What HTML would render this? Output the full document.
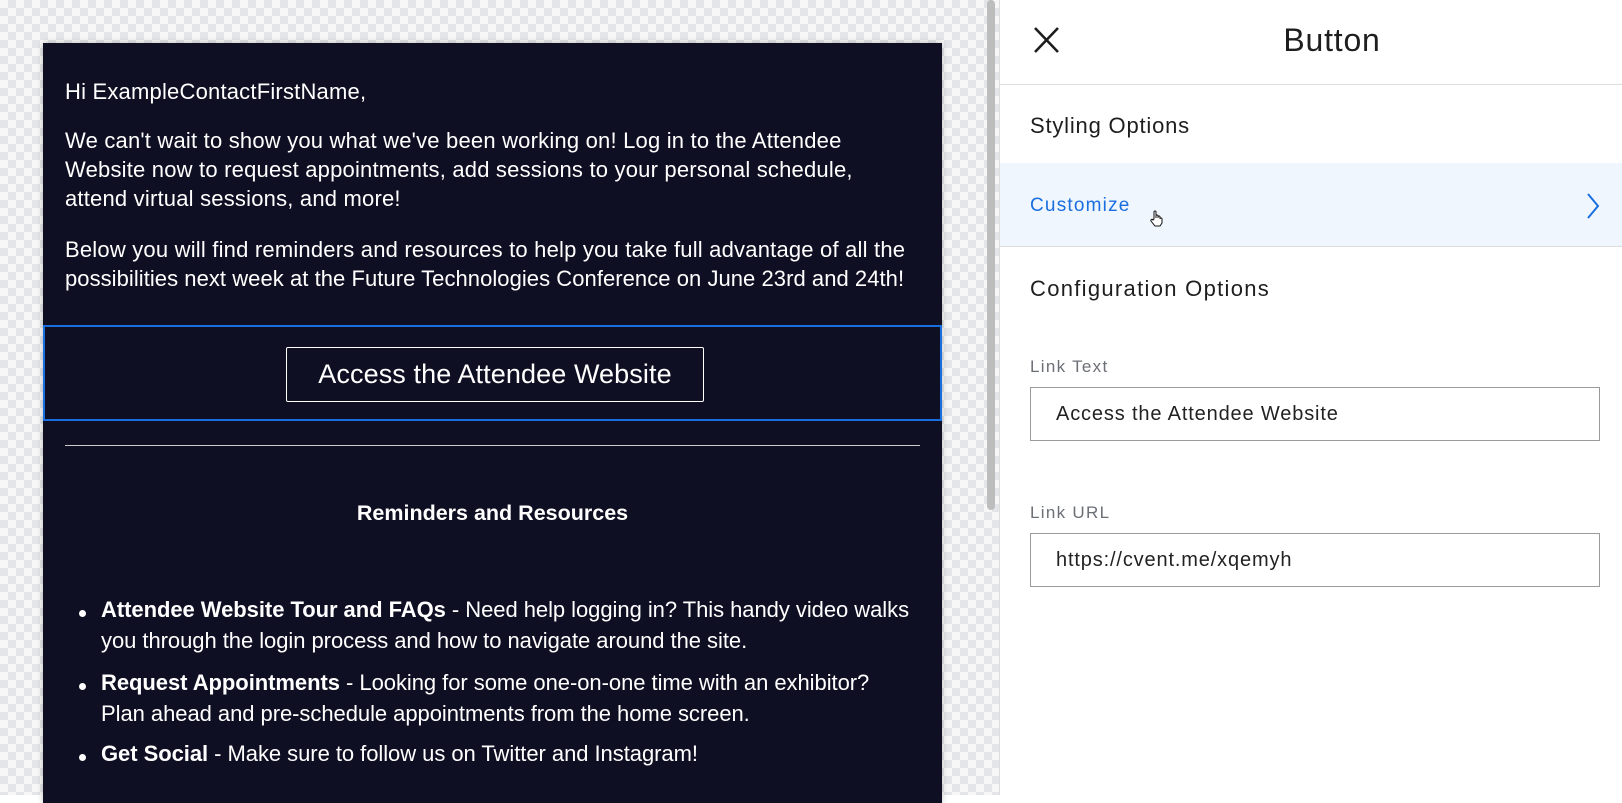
<!DOCTYPE html>
<html><head><meta charset="utf-8"><style>
*{margin:0;padding:0;box-sizing:border-box}
body{width:1622px;height:795px;overflow:hidden;position:relative;font-family:"Liberation Sans",sans-serif;background:#fff}
.left{position:absolute;left:0;top:0;width:999px;height:795px;background-color:#f4f5f6;background-image:conic-gradient(#e3e5e8 25%,#f7f7f8 0 50%,#e3e5e8 0 75%,#f7f7f8 0);background-size:16px 16px}
.scroll{position:absolute;left:987px;top:0;width:8px;height:510px;background:#bdbdbd;border-radius:4px}
.card{position:absolute;left:43px;top:43px;width:899px;height:760px;background:#0f0f23;box-shadow:0 0 6px rgba(0,0,0,.25);color:#fff;font-size:22px;letter-spacing:0.2px}
.t{position:absolute;left:22px;white-space:nowrap}
.sel{position:absolute;left:0;top:282px;width:899px;height:96px;border:2px solid #1a6fe0}
.btn{position:absolute;left:241px;top:20px;width:418px;height:55px;border:1px solid #fff;border-radius:2px;text-align:center;line-height:52px;font-size:27px;letter-spacing:0.1px}
.hr{position:absolute;left:22px;top:402px;width:855px;height:1px;background:#ccc}
.dot{position:absolute;left:36px;width:7px;height:7px;border-radius:50%;background:#fff}
.bl{letter-spacing:-0.05px}
.right{position:absolute;left:999px;top:0;width:623px;height:795px;background:#fff;border-left:1px solid #ddd;color:#1e1e1e}
.r{position:absolute;white-space:nowrap}
.div{position:absolute;left:0;width:623px;height:1px;background:#ddd}
.inp{position:absolute;left:30px;width:570px;height:54px;border:1px solid #9a9a9a;font-size:20px;letter-spacing:0.85px;padding-left:25px;line-height:52px;color:#222}
</style></head><body>
<div class="left"><div class="scroll"></div>
<div class="card">
<div class="t" style="top:36px">Hi ExampleContactFirstName,</div>
<div class="t" style="top:85px">We can't wait to show you what we've been working on! Log in to the Attendee</div>
<div class="t" style="top:114px">Website now to request appointments, add sessions to your personal schedule,</div>
<div class="t" style="top:143px">attend virtual sessions, and more!</div>
<div class="t" style="top:194px">Below you will find reminders and resources to help you take full advantage of all the</div>
<div class="t" style="top:223px;letter-spacing:0.05px">possibilities next week at the Future Technologies Conference on June 23rd and 24th!</div>
<div class="sel"><div class="btn">Access the Attendee Website</div></div>
<div class="hr"></div>
<div class="t" style="top:458px;left:0;width:899px;text-align:center;font-weight:bold;letter-spacing:0;font-size:21.5px">Reminders and Resources</div>
<div class="bl">
<div class="dot" style="top:567px"></div>
<div class="t" style="top:554px;left:58px"><b>Attendee Website Tour and FAQs</b> - Need help logging in? This handy video walks</div>
<div class="t" style="top:585px;left:58px">you through the login process and how to navigate around the site.</div>
<div class="dot" style="top:640px"></div>
<div class="t" style="top:627px;left:58px"><b>Request Appointments</b> - Looking for some one-on-one time with an exhibitor?</div>
<div class="t" style="top:658px;left:58px">Plan ahead and pre-schedule appointments from the home screen.</div>
<div class="dot" style="top:711px"></div>
<div class="t" style="top:698px;left:58px"><b>Get Social</b> - Make sure to follow us on Twitter and Instagram!</div>
</div>
</div></div>
<div class="right">
<svg style="position:absolute;left:33px;top:27px" width="27" height="26" viewBox="0 0 27 26"><path d="M2 1L25 25M25 1L2 25" stroke="#1e1e1e" stroke-width="2.6"/></svg>
<div class="r" style="left:0;width:664px;text-align:center;top:22px;font-size:32px;letter-spacing:0.8px">Button</div>
<div class="div" style="top:84px"></div>
<div class="r" style="left:30px;top:113px;font-size:22px;letter-spacing:0.8px">Styling Options</div>
<div style="position:absolute;left:0;top:163px;width:623px;height:84px;background:#f0f6fd;border-bottom:1px solid #ddd"></div>
<div class="r" style="left:30px;top:195px;font-size:19px;letter-spacing:1.2px;color:#1a6fe0">Customize</div>
<svg style="position:absolute;left:586px;top:192px" width="14" height="28" viewBox="0 0 14 28"><path d="M2 2L12 14L2 26" stroke="#1a6fe0" stroke-width="2" fill="none"/></svg>
<svg style="position:absolute;left:150px;top:210px" width="14" height="17" viewBox="0 0 14 17"><path d="M4 9V2a1 1 0 0 1 2 0v6V6a1 1 0 0 1 2 0v2V7a1 1 0 0 1 2 0v2a1 1 0 0 1 2 0v4l-2 3H5L1 11a1 1 0 0 1 2-1z" fill="#fff" stroke="#111" stroke-width="1"/></svg>
<div class="r" style="left:30px;top:276px;font-size:22px;letter-spacing:1.3px">Configuration Options</div>
<div class="r" style="left:30px;top:357px;font-size:17px;letter-spacing:1.3px;color:#6b6f76">Link Text</div>
<div class="inp" style="top:387px">Access the Attendee Website</div>
<div class="r" style="left:30px;top:503px;font-size:17px;letter-spacing:1.3px;color:#6b6f76">Link URL</div>
<div class="inp" style="top:533px">https://cvent.me/xqemyh</div>
</div>
</body></html>
